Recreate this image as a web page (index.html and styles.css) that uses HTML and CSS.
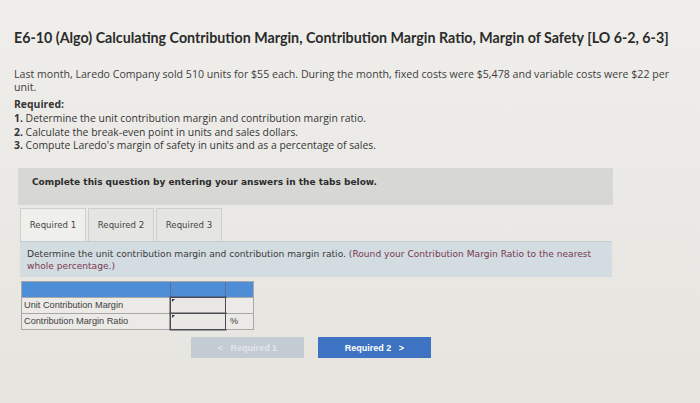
FILE: index.html
```html
<!DOCTYPE html>
<html>
<head>
<meta charset="utf-8">
<link rel="stylesheet" href="styles.css">
</head>
<body>
<div class="page">
  <h1 class="title">E6-10 (Algo) Calculating Contribution Margin, Contribution Margin Ratio, Margin of Safety [LO 6-2, 6-3]</h1>
  <p class="intro">Last month, Laredo Company sold 510 units for $55 each. During the month, fixed costs were $5,478 and variable costs were $22 per unit.</p>
  <div class="required">
    <div class="req-head">Required:</div>
    <div class="req-line"><b>1.</b> Determine the unit contribution margin and contribution margin ratio.</div>
    <div class="req-line"><b>2.</b> Calculate the break-even point in units and sales dollars.</div>
    <div class="req-line"><b>3.</b> Compute Laredo's margin of safety in units and as a percentage of sales.</div>
  </div>
  <div class="notice">Complete this question by entering your answers in the tabs below.</div>
  <div class="tabs">
    <div class="tab active">Required 1</div>
    <div class="tab">Required 2</div>
    <div class="tab">Required 3</div>
  </div>
  <div class="panel">Determine the unit contribution margin and contribution margin ratio. <span class="hint">(Round your Contribution Margin Ratio to the nearest whole percentage.)</span></div>
  <div class="grid">
    <div class="cell head"></div>
    <div class="cell head inp-head"></div>
    <div class="cell head"></div>
    <div class="cell lbl">Unit Contribution Margin</div>
    <div class="cell inp"><span class="mark"></span></div>
    <div class="cell unit"></div>
    <div class="cell lbl">Contribution Margin Ratio</div>
    <div class="cell inp"><span class="mark"></span></div>
    <div class="cell unit">%</div>
  </div>
  <div class="nav">
    <div class="btn prev">&lt;&nbsp;&nbsp;&nbsp;Required 1</div>
    <div class="btn next">Required 2&nbsp;&nbsp;&nbsp;&gt;</div>
  </div>
</div>
</body>
</html>
```
FILE: styles.css
```css
html, body { margin: 0; padding: 0; }
body {
  background: linear-gradient(#efeeeb, #e6e4df);
  color: #2f2f2f;
  font-family: "Open Sans", "Liberation Sans", sans-serif;
  width: 700px;
  height: 403px;
  overflow: hidden;
}
.page { padding: 29px 0 0 14px; }
.title {
  margin: 0;
  font-family: Lato, "Liberation Sans", sans-serif;
  font-size: 14.25px;
  line-height: 18px;
  font-weight: 700;
  color: #2b2b2b;
  white-space: nowrap;
}
.intro {
  margin: 21px 0 0 0;
  width: 665px;
  font-size: 10.6px;
  line-height: 13px;
  color: #3d3d3d;
}
.required { margin-top: 4px; font-size: 10.4px; line-height: 13.3px; color: #363636; }
.req-head { font-weight: 700; margin-bottom: 1px; }
.req-line b { font-weight: 700; }
.notice {
  margin: 16px 0 0 4px;
  width: 595px;
  height: 37px;
  box-sizing: border-box;
  padding: 9px 0 0 14px;
  line-height: 11px;
  background: #d7d7d4;
  font-family: "DejaVu Sans", Verdana, sans-serif;
  font-weight: 700;
  font-size: 9px;
  color: #2c2c2c;
}
.tabs { display: flex; margin: 3px 0 0 6px; gap: 2px; height: 33px; }
.tab {
  width: 66px;
  box-sizing: border-box;
  border: 1px solid #cfcfcc;
  border-bottom: none;
  background: #e5e5e2;
  font-family: "DejaVu Sans", Verdana, sans-serif;
  font-size: 8.6px;
  line-height: 11px;
  color: #444;
  display: flex;
  align-items: center;
  justify-content: center;
}
.tab.active { background: #efefec; }
.panel {
  margin-left: 6px;
  width: 592px;
  height: 36px;
  box-sizing: border-box;
  padding: 6px 10px 0 7px;
  background: #d2dce1;
  border-top: 1px solid #c3ccd1;
  font-family: "DejaVu Sans", Verdana, sans-serif;
  font-size: 9.1px;
  line-height: 12px;
  color: #3a3a3a;
}
.hint { color: #7b3850; }
.grid {
  margin: 4px 0 0 7px;
  display: grid;
  grid-template-columns: 148px 54px 27px;
  grid-template-rows: 15px 15px 15px;
  gap: 1px;
  padding: 1px;
  width: max-content;
  background: #a8a8a8;
  font-family: "Liberation Sans", Arial, sans-serif;
  font-size: 9.2px;
  color: #3e3e3e;
}
.cell { background: #ebeae6; padding-left: 2px; line-height: 15px; position: relative; }
.cell.head { background: #4d8ed6; }
.cell.inp-head { box-shadow: -1px 0 0 #58709a, 1px 0 0 #58709a; }
.cell.inp { background: #e9e8e4; box-shadow: 0 0 0 1.5px #4a4a55; }
.cell.unit { padding-left: 4px; }
.mark { position: absolute; left: 1px; top: 1px; width: 0; height: 0; border-left: 3px solid #333; border-bottom: 3px solid transparent; }
.nav { display: flex; margin: 7px 0 0 177px; gap: 14px; }
.btn {
  width: 113px;
  height: 21px;
  display: flex;
  align-items: center;
  justify-content: center;
  font-family: "Liberation Sans", Arial, sans-serif;
  font-weight: 700;
  font-size: 9px;
}
.prev { background: #c4ccd3; color: #e2e6ea; }
.next { background: #3d73c2; color: #fff; }
```
